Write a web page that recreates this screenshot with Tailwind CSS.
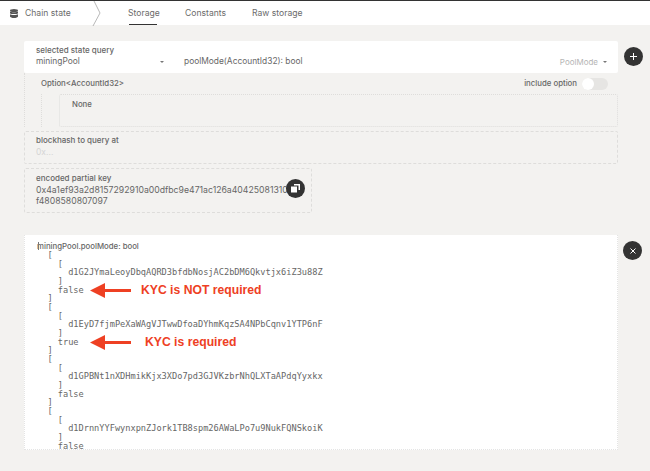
<!DOCTYPE html>
<html lang="en">
<head>
  <meta charset="UTF-8" />
  <title>Chain state</title>
  <script src="https://cdn.jsdelivr.net/npm/@tailwindcss/browser@4"></script>
</head>
<body class="bg-[#f3f2f0] font-['Inter',sans-serif] text-[#4e4e4e] h-[471px] overflow-hidden">

  <!-- top bar -->
  <header class="h-[25px] bg-white border-t border-[#333] flex items-center relative text-[8.6px] text-[#6b6b6b]">
    <svg class="ml-[10px] w-[8px] h-[9px]" viewBox="0 0 8 9" fill="#555">
      <ellipse cx="4" cy="1.5" rx="4" ry="1.5"/>
      <path d="M0 2.6c1 1 7 1 8 0v1.6c-1 1.200-7 1.200-8 0zM0 5.200c1 1 7 1 8 0v2.300C8 8.400 6 9 4 9s-4-.6-4-1.500z"/>
    </svg>
    <span class="ml-[7px] w-[67px]">Chain state</span>
    <svg class="w-[10px] h-[25px] -ml-[1px]" viewBox="0 0 10 25" fill="none" stroke="#888" stroke-width="0.6"><path d="M3 0l6 12-7 13"/></svg>
    <nav class="flex ml-[27px] h-full items-center">
      <span class="relative h-full flex items-center w-[57px]">Storage<span class="absolute left-[1px] bottom-0 w-[28px] h-px bg-[#333]"></span></span>
      <span class="w-[67px]">Constants</span>
      <span>Raw storage</span>
    </nav>
  </header>

  <main class="pt-[16px] pl-[24px] w-[618px]">

    <!-- state query -->
    <section class="relative h-[32px] bg-white rounded-[2px] pl-[12px] pr-[11px] pt-[4px]">
      <div class="text-[8px] leading-[10px] font-medium text-[#666]">selected state query</div>
      <div class="flex items-center h-[13px] text-[8.4px] text-[#666]">
        <span class="w-[124px]">miningPool</span>
        <span class="w-0 h-0 border-x-[2.5px] border-t-[2.5px] border-x-transparent border-t-[#777]"></span>
        <span class="ml-[20px]">poolMode(AccountId32): bool</span>
        <span class="ml-auto text-[#b5b5b5] text-[8px]">PoolMode</span>
        <span class="ml-[5px] w-0 h-0 border-x-[2.5px] border-t-[2.5px] border-x-transparent border-t-[#777]"></span>
      </div>
      <button class="absolute -right-[25px] top-[6px] w-[19px] h-[19px] rounded-full bg-[#333] flex items-center justify-center">
        <svg class="w-[7px] h-[7px]" viewBox="0 0 7 7" stroke="#fff" stroke-width="1"><path d="M3.500 0v7M0 3.500h7"/></svg>
      </button>
    </section>

    <!-- option params -->
    <section class="relative h-[54px] border-l border-dotted border-[#dedddb] pl-[16px]">
      <div class="flex items-center h-[21px] pt-[1px] pr-[10px] text-[7.8px] font-medium text-[#666]">
        <span>Option&lt;AccountId32&gt;</span>
        <span class="ml-auto">include option</span>
        <span class="relative ml-[5px] w-[26px] h-[12px] rounded-full bg-[#e6e5e3]">
          <span class="absolute left-0 top-0 w-[12px] h-[12px] rounded-full bg-white"></span>
        </span>
      </div>
      <div class="h-[33px] border-l border-dotted border-[#dedddb] pl-[17px]">
        <div class="h-full border border-dotted border-[#dedddb] rounded-[2px] pl-[12px] pt-[4px] text-[7.8px] font-medium text-[#666]">None</div>
      </div>
    </section>

    <!-- blockhash -->
    <section class="mt-[4px] h-[33px] border border-dashed border-[#dedddb] rounded-[2px] pl-[11px] pt-[3px]">
      <div class="text-[8px] leading-[11px] font-medium text-[#666]">blockhash to query at</div>
      <div class="text-[8.5px] leading-[13px] text-[#d5d5d5]">0x...</div>
    </section>

    <!-- encoded key -->
    <section class="relative mt-[4px] h-[45px] w-[288px] border border-dashed border-[#dedddb] rounded-[2px] pl-[11px] pt-[3px]">
      <div class="text-[8px] leading-[12px] font-medium text-[#666]">encoded partial key</div>
      <div class="text-[8.7px] leading-[10.5px] text-[#666] whitespace-nowrap mt-[1px]">0x4a1ef93a2d8157292910a00dfbc9e471ac126a40425081310<br>f4808580807097</div>
      <button class="absolute right-[6px] top-[10px] w-[19px] h-[19px] rounded-full bg-[#333] flex items-center justify-center">
        <svg class="w-[9px] h-[9px]" viewBox="0 0 9 9" fill="#fff"><path d="M3 0h6v6H7.500V1.500H3z"/><path d="M0 2.500h6v6H0z"/></svg>
      </button>
    </section>

    <!-- query result -->
    <section class="relative mt-[22px] h-[215px] bg-white border-x border-b border-dotted border-[#e4e4e4] pl-[12px] pt-[6px] overflow-visible">
      <div class="relative text-[7.8px] leading-[10px] font-medium text-[#666]">miningPool.poolMode: bool<span class="absolute left-[1px] top-[1px] w-px h-[8px] bg-[#777]"></span></div>
      <div class="h-[199px] overflow-hidden">
<pre class="font-['DejaVu_Sans_Mono',monospace] text-[8.65px] leading-[8.67px] text-[#666]">  [
    [
      d1G2JYmaLeoyDbqAQRD3bfdbNosjAC2bDM6Qkvtjx6iZ3u88Z
    ]
    false
  ]
  [
    [
      d1EyD7fjmPeXaWAgVJTwwDfoaDYhmKqzSA4NPbCqnv1YTP6nF
    ]
    true
  ]
  [
    [
      d1GPBNt1nXDHmikKjx3XDo7pd3GJVKzbrNhQLXTaAPdqYyxkx
    ]
    false
  ]
  [
    [
      d1DrnnYYFwynxpnZJork1TB8spm26AWaLPo7u9NukFQNSkoiK
    ]
    false
  ]
  [</pre>
      </div>

      <!-- annotations -->
      <svg class="absolute left-[65px] top-[48px] w-[41px] h-[15px]" viewBox="0 0 41 15" fill="#ee4023"><path d="M0 7.500 15 0v6h26v3H15v6z"/></svg>
      <span class="absolute left-[116px] top-[48px] text-[12.2px] leading-[15px] font-['Liberation_Sans',sans-serif] font-bold text-[#ee4023] whitespace-nowrap">KYC is NOT required</span>
      <svg class="absolute left-[65px] top-[100px] w-[41px] h-[15px]" viewBox="0 0 41 15" fill="#ee4023"><path d="M0 7.500 15 0v6h26v3H15v6z"/></svg>
      <span class="absolute left-[120px] top-[100px] text-[12.2px] leading-[15px] font-['Liberation_Sans',sans-serif] font-bold text-[#ee4023] whitespace-nowrap">KYC is required</span>

      <button class="absolute -right-[25px] top-[6px] w-[19px] h-[19px] rounded-full bg-[#333] flex items-center justify-center">
        <svg class="w-[6px] h-[6px]" viewBox="0 0 6 6" stroke="#fff" stroke-width="1"><path d="M0.500 0.500l5 5M5.500 0.500l-5 5"/></svg>
      </button>
    </section>
  </main>
</body>
</html>
